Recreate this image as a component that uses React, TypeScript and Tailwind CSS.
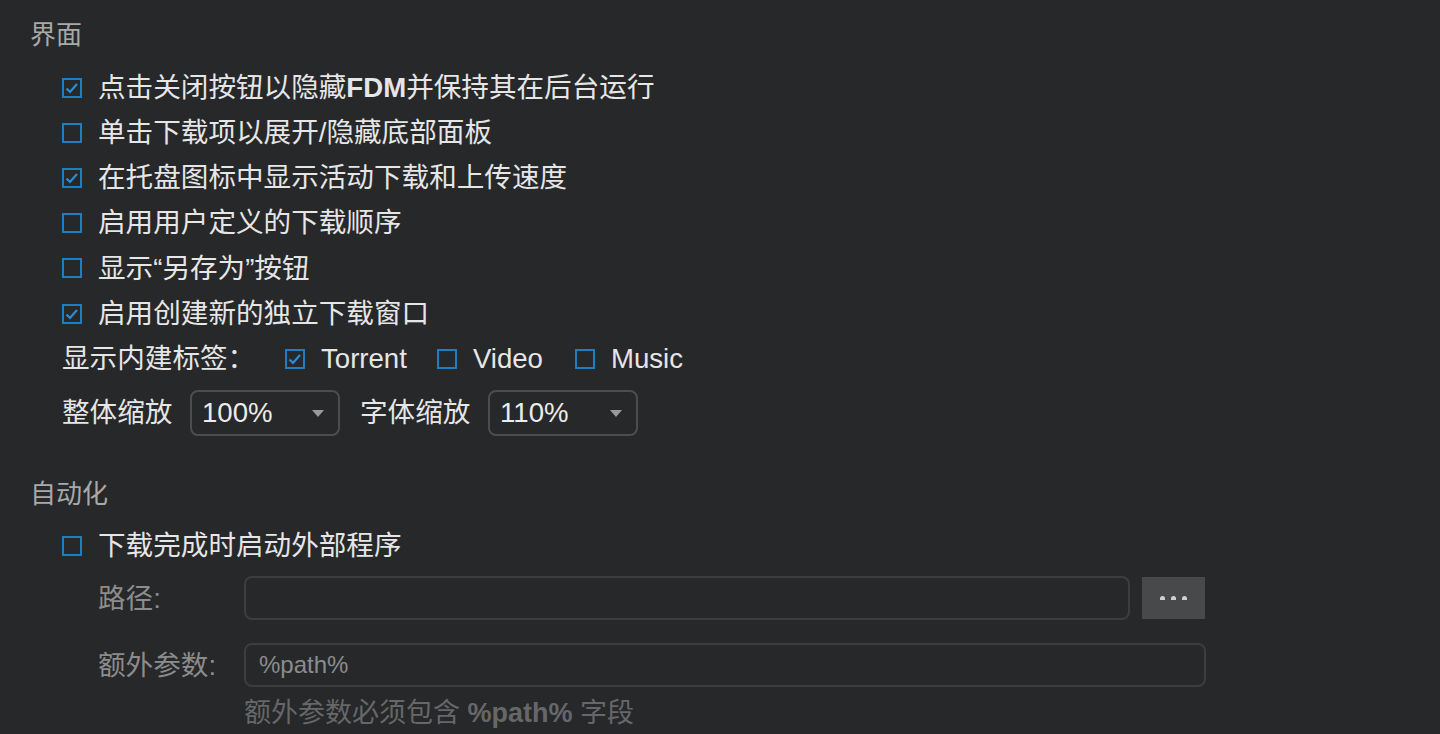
import React from "react";

const font = { fontFamily: '"Liberation Sans", "Noto Sans CJK SC", sans-serif' };

function Box({ checked }: { checked?: boolean }) {
  return (
    <span className="flex h-[20px] w-[20px] shrink-0 items-center justify-center border-2 border-[#1c7fc4]">
      {checked && (
        <svg width="16" height="16" viewBox="0 0 16 16" fill="none">
          <path d="M2.5 8.5 L6 12 L13 4" stroke="#2a8fd8" strokeWidth="2.2" />
        </svg>
      )}
    </span>
  );
}

function Check({ label, checked }: { label: React.ReactNode; checked?: boolean }) {
  return (
    <div className="flex h-[45.2px] items-center gap-[16px]">
      <Box checked={checked} />
      <span className="text-[#e6e6e6]">{label}</span>
    </div>
  );
}

function Select({ value }: { value: string }) {
  return (
    <div className="flex h-[46px] w-[150px] items-center justify-between rounded-[8px] border-2 border-[#4c4d50] pl-[10px] pr-[14px]">
      <span className="text-[#ececec]">{value}</span>
      <svg width="12" height="7" viewBox="0 0 12 7">
        <path d="M0 0 H12 L6 7 Z" fill="#9a9a9a" />
      </svg>
    </div>
  );
}

export default function App() {
  return (
    <div className="min-h-[734px] w-[1440px] overflow-hidden bg-[#27282a] pl-[30px] pt-[17px] text-[27.6px] leading-none" style={font}>
      <div className="flex h-[36px] items-center text-[26px] text-[#a9a9a9]">界面</div>

      <div className="mt-[12px] pl-[32px]">
        <Check checked label={<>点击关闭按钮以隐藏<b className="font-semibold">FDM</b>并保持其在后台运行</>} />
        <Check label="单击下载项以展开/隐藏底部面板" />
        <Check checked label="在托盘图标中显示活动下载和上传速度" />
        <Check label="启用用户定义的下载顺序" />
        <Check label="显示“另存为”按钮" />
        <Check checked label="启用创建新的独立下载窗口" />

        <div className="flex h-[46px] items-center text-[#e6e6e6]">
          <span className="w-[223px]">显示内建标签：</span>
          <div className="flex items-center gap-[16px]">
            <Box checked />
            <span>Torrent</span>
          </div>
          <div className="ml-[30px] flex items-center gap-[16px]">
            <Box />
            <span>Video</span>
          </div>
          <div className="ml-[32px] flex items-center gap-[16px]">
            <Box />
            <span>Music</span>
          </div>
        </div>

        <div className="mt-[8px] flex h-[46px] items-center text-[#e6e6e6]">
          <span className="w-[128px]">整体缩放</span>
          <Select value="100%" />
          <span className="ml-[20px] w-[128px]">字体缩放</span>
          <Select value="110%" />
        </div>
      </div>

      <div className="mt-[40px] flex h-[36px] items-center text-[26px] text-[#a9a9a9]">自动化</div>

      <div className="mt-[11px] pl-[32px]">
        <Check label="下载完成时启动外部程序" />

        <div className="mt-[8px] flex h-[44px] items-center">
          <span className="w-[182px] pl-[36px] text-[#8c8c8c]">路径:</span>
          <div className="h-[44px] w-[886px] rounded-[8px] border-2 border-[#3c3d40]" />
          <div className="ml-[12px] flex h-[42px] w-[63px] items-center justify-center gap-[6px] bg-[#48494b]">
            <span className="h-[4px] w-[5px] rounded-t-full bg-[#cfcfcf]" />
            <span className="h-[4px] w-[5px] rounded-t-full bg-[#cfcfcf]" />
            <span className="h-[4px] w-[5px] rounded-t-full bg-[#cfcfcf]" />
          </div>
        </div>

        <div className="mt-[23px] flex h-[44px] items-center">
          <span className="w-[182px] pl-[36px] text-[#8c8c8c]">额外参数:</span>
          <div className="flex h-[44px] w-[962px] items-center rounded-[8px] border-2 border-[#3c3d40] pl-[13px] text-[24px] text-[#8c8c8c]">
            %path%
          </div>
        </div>

        <div className="mt-[13px] pl-[182px] text-[27px] text-[#666769]">
          额外参数必须包含 <b className="font-semibold">%path%</b> 字段
        </div>
      </div>
    </div>
  );
}
